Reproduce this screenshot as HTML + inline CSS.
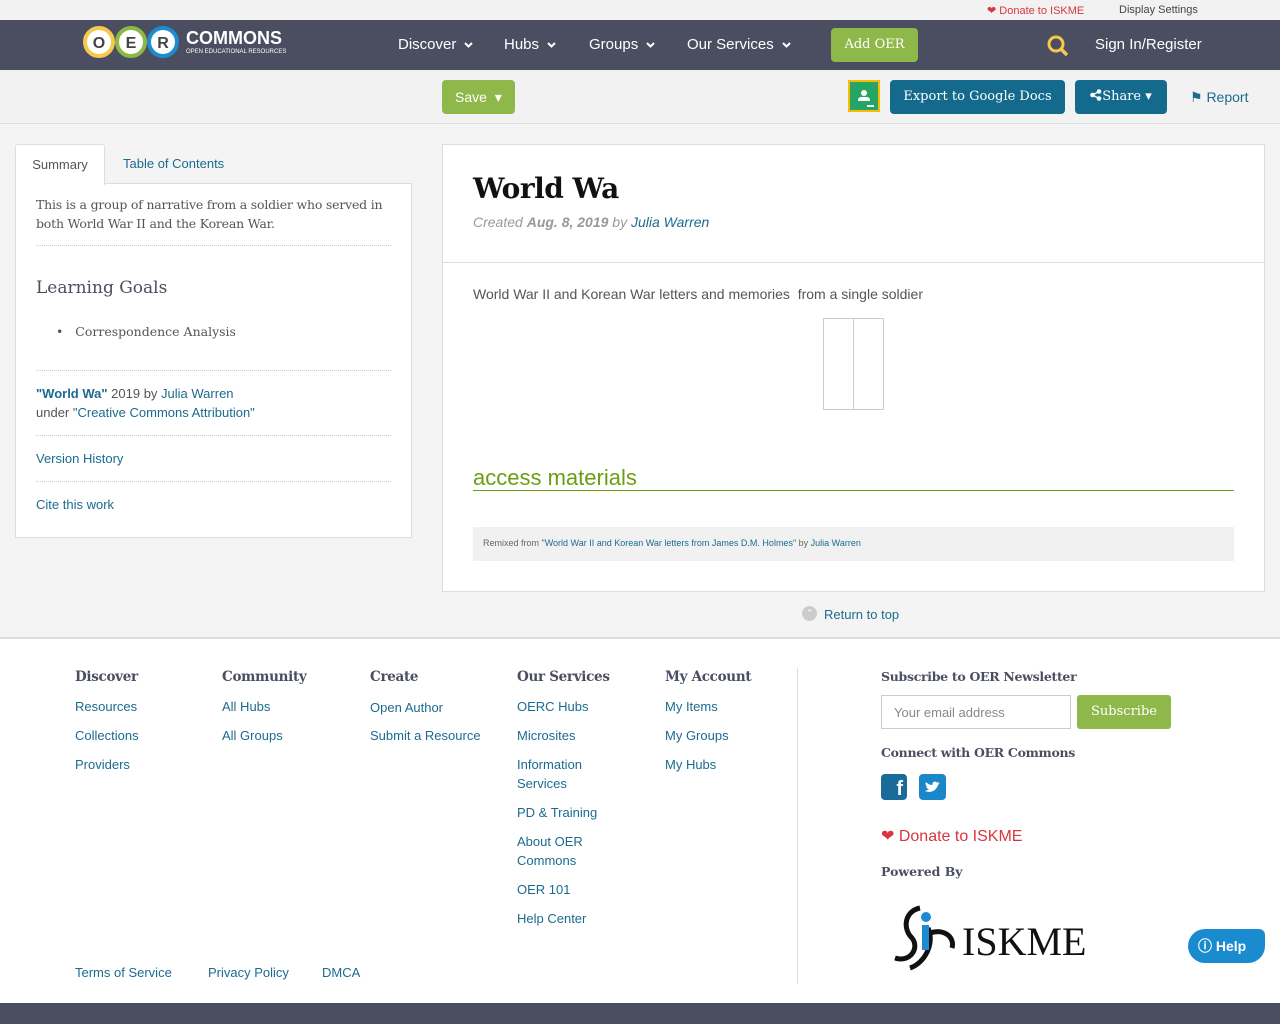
<!DOCTYPE html>
<html><head><meta charset="utf-8"><style>
*{box-sizing:border-box;margin:0;padding:0}
body{width:1280px;height:1024px;overflow:hidden;background:#f4f4f4;font-family:"Liberation Sans",sans-serif;position:relative;color:#444}
a{color:#1b6b8f;text-decoration:none}
.abs{position:absolute}
.serif{font-family:"DejaVu Serif","Liberation Serif",serif}
.chev{display:inline-block;vertical-align:middle;margin-left:8px}
</style></head><body>
<div class="abs" style="left:0;top:0;width:1280px;height:20px;background:#f1f2f1"></div>
<div class="abs" style="left:987px;top:4px;font-size:11px;color:#d9363e">&#10084; Donate to ISKME</div>
<div class="abs" style="left:1119px;top:4px;font-size:11px;color:#444">Display Settings</div>
<div class="abs" style="left:0;top:20px;width:1280px;height:50px;background:#4a4e60"></div>
<svg class="abs" style="left:82px;top:25px" width="205" height="36">
<circle cx="17" cy="17" r="14" fill="#fff" stroke="#f6c94e" stroke-width="4"/>
<circle cx="49" cy="17" r="14" fill="#fff" stroke="#8cb844" stroke-width="4"/>
<circle cx="81" cy="17" r="14" fill="#fff" stroke="#1d8bd1" stroke-width="4"/>
<text x="17" y="23" font-size="16" font-weight="bold" text-anchor="middle" fill="#444" font-family="Liberation Sans">O</text>
<text x="49" y="23" font-size="16" font-weight="bold" text-anchor="middle" fill="#444" font-family="Liberation Sans">E</text>
<text x="81" y="23" font-size="16" font-weight="bold" text-anchor="middle" fill="#444" font-family="Liberation Sans">R</text>
<text x="104" y="19" font-size="18" font-weight="bold" fill="#fff" font-family="Liberation Sans">COMMONS</text>
<text x="104" y="28" font-size="6" fill="#fff" font-family="Liberation Sans">OPEN EDUCATIONAL RESOURCES</text>
</svg>
<div class="abs" style="left:398px;top:36px;font-size:15px;color:#fff">Discover<svg class="chev" width="9" height="6"><path d="M1 1 L4.5 4.5 L8 1" fill="none" stroke="#fff" stroke-width="2"/></svg></div>
<div class="abs" style="left:504px;top:36px;font-size:15px;color:#fff">Hubs<svg class="chev" width="9" height="6"><path d="M1 1 L4.5 4.5 L8 1" fill="none" stroke="#fff" stroke-width="2"/></svg></div>
<div class="abs" style="left:589px;top:36px;font-size:15px;color:#fff">Groups<svg class="chev" width="9" height="6"><path d="M1 1 L4.5 4.5 L8 1" fill="none" stroke="#fff" stroke-width="2"/></svg></div>
<div class="abs" style="left:687px;top:36px;font-size:15px;color:#fff">Our Services<svg class="chev" width="9" height="6"><path d="M1 1 L4.5 4.5 L8 1" fill="none" stroke="#fff" stroke-width="2"/></svg></div>
<div class="abs serif" style="left:831px;top:28px;width:87px;height:34px;background:#8fb84a;border-radius:4px;color:#fff;font-size:13px;text-align:center;line-height:34px">Add OER</div>
<svg class="abs" style="left:1046px;top:34px" width="24" height="24"><circle cx="10" cy="10" r="7" fill="none" stroke="#f6c94e" stroke-width="3"/><line x1="15" y1="15" x2="21" y2="21" stroke="#f6c94e" stroke-width="3.5"/></svg>
<div class="abs" style="left:1095px;top:36px;font-size:15px;color:#fff">Sign In/Register</div>
<div class="abs" style="left:0;top:70px;width:1280px;height:54px;background:#f1f2f1;border-bottom:1px solid #ddd"></div>
<div class="abs" style="left:442px;top:80px;width:73px;height:34px;background:#8fb84a;border-radius:4px;color:#fff;font-size:14px;line-height:34px;padding-left:13px">Save &nbsp;&#9662;</div>
<div class="abs" style="left:848px;top:80px;width:32px;height:32px;background:#fbbc05;padding:2px"><div style="width:28px;height:28px;background:#25a463;position:relative"><div style="position:absolute;left:11px;top:8px;width:6px;height:6px;border-radius:50%;background:#fff"></div><div style="position:absolute;left:8px;top:15px;width:12px;height:4px;background:#fff;border-radius:3px 3px 0 0"></div><div style="position:absolute;left:17px;top:23px;width:7px;height:2px;background:#fff"></div></div></div>
<div class="abs serif" style="left:890px;top:80px;width:175px;height:34px;background:#146a8c;border-radius:4px;color:#fff;font-size:13px;line-height:33px;text-align:center">Export to Google Docs</div>
<div class="abs serif" style="left:1075px;top:80px;width:92px;height:34px;background:#146a8c;border-radius:4px;color:#fff;font-size:13px;line-height:34px;text-align:center"><svg width="12" height="12" style="vertical-align:-1px"><circle cx="9" cy="2.5" r="2.3" fill="#fff"/><circle cx="2.5" cy="6" r="2.3" fill="#fff"/><circle cx="9" cy="9.5" r="2.3" fill="#fff"/><path d="M9 2.5 L2.5 6 L9 9.5" stroke="#fff" fill="none" stroke-width="1.3"/></svg>Share &#9662;</div>
<div class="abs" style="left:1190px;top:89px;font-size:14px;color:#1b6b8f">&#9873; Report</div>
<div class="abs" style="left:15px;top:144px;width:90px;height:41px;background:#fff;border:1px solid #ddd;border-bottom:none;border-radius:3px 3px 0 0;font-size:13px;color:#555;text-align:center;line-height:40px;z-index:2">Summary</div>
<div class="abs" style="left:123px;top:156px;font-size:13px;color:#1b6b8f">Table of Contents</div>
<div class="abs" style="left:15px;top:183px;width:397px;height:355px;background:#fff;border:1px solid #ddd"></div>
<div class="abs serif" style="left:36px;top:195px;width:365px;font-size:12.5px;line-height:19px;color:#555;letter-spacing:-0.2px">This is a group of narrative from a soldier who served in both World War II and the Korean War.</div>
<div class="abs" style="left:36px;top:245px;width:355px;border-top:1px dotted #ccc"></div>
<div class="abs serif" style="left:36px;top:278px;font-size:17px;color:#4a4e60">Learning Goals</div>
<div class="abs serif" style="left:56px;top:324px;font-size:12.5px;color:#555">•&nbsp;&nbsp;&nbsp;Correspondence Analysis</div>
<div class="abs" style="left:36px;top:370px;width:355px;border-top:1px dotted #ccc"></div>
<div class="abs" style="left:36px;top:384px;font-size:13px;line-height:19px;color:#555"><a style="font-weight:bold">"World Wa"</a> 2019 by <a>Julia Warren</a><br>under <a>"Creative Commons Attribution"</a></div>
<div class="abs" style="left:36px;top:435px;width:355px;border-top:1px dotted #ccc"></div>
<div class="abs" style="left:36px;top:451px;font-size:13px"><a>Version History</a></div>
<div class="abs" style="left:36px;top:481px;width:355px;border-top:1px dotted #ccc"></div>
<div class="abs" style="left:36px;top:497px;font-size:13px"><a>Cite this work</a></div>
<div class="abs" style="left:442px;top:144px;width:823px;height:448px;background:#fff;border:1px solid #ddd"></div>
<div class="abs" style="left:443px;top:262px;width:821px;border-top:1px solid #ddd"></div>
<div class="abs serif" style="left:473px;top:172px;font-size:28px;font-weight:bold;color:#111;letter-spacing:-0.5px">World Wa</div>
<div class="abs" style="left:473px;top:214px;font-size:14px;font-style:italic;color:#999">Created <b>Aug. 8, 2019</b> by <a>Julia Warren</a></div>
<div class="abs" style="left:473px;top:286px;font-size:14px;color:#555">World War II and Korean War letters and memories&nbsp; from a single soldier</div>
<div class="abs" style="left:823px;top:318px;width:61px;height:92px;border:1px solid #ccc"></div>
<div class="abs" style="left:853px;top:318px;height:92px;border-left:1px solid #ccc"></div>
<div class="abs" style="left:473px;top:465px;font-size:22px;color:#6a9e12">access materials</div>
<div class="abs" style="left:473px;top:490px;width:761px;border-top:1.5px solid #6a9e12"></div>
<div class="abs" style="left:473px;top:527px;width:761px;height:34px;background:#f1f1f1;font-size:9px;color:#666;padding:11px 10px">Remixed from <a>"World War II and Korean War letters from James D.M. Holmes"</a> by <a>Julia Warren</a></div>
<div class="abs" style="left:802px;top:606px;width:15px;height:15px;border-radius:50%;background:#ccc;color:#fff;font-size:9px;text-align:center;line-height:15px">&#8963;</div>
<div class="abs" style="left:824px;top:607px;font-size:13px;color:#1b6b8f">Return to top</div>
<div class="abs" style="left:0;top:637px;width:1280px;height:366px;background:#fff;border-top:2px solid #ddd"></div>
<div class="abs serif" style="left:75px;top:669px;font-size:13.5px;font-weight:bold;color:#4a4e60;letter-spacing:-0.3px">Discover</div>
<div class="abs serif" style="left:222px;top:669px;font-size:13.5px;font-weight:bold;color:#4a4e60;letter-spacing:-0.3px">Community</div>
<div class="abs serif" style="left:370px;top:669px;font-size:13.5px;font-weight:bold;color:#4a4e60;letter-spacing:-0.3px">Create</div>
<div class="abs serif" style="left:517px;top:669px;font-size:13.5px;font-weight:bold;color:#4a4e60;letter-spacing:-0.3px">Our Services</div>
<div class="abs serif" style="left:665px;top:669px;font-size:13.5px;font-weight:bold;color:#4a4e60;letter-spacing:-0.3px">My Account</div>
<div class="abs" style="left:75px;top:692px;font-size:13px;line-height:29px"><a>Resources</a><br><a>Collections</a><br><a>Providers</a></div>
<div class="abs" style="left:222px;top:692px;font-size:13px;line-height:29px"><a>All Hubs</a><br><a>All Groups</a></div>
<div class="abs" style="left:370px;top:694px;font-size:13px;line-height:28px"><a>Open Author</a><br><a>Submit a Resource</a></div>
<div class="abs" style="left:517px;top:697px;font-size:13px;line-height:19px;width:100px"><a>OERC Hubs</a><div style="height:10px"></div><a>Microsites</a><div style="height:10px"></div><a>Information Services</a><div style="height:10px"></div><a>PD &amp; Training</a><div style="height:10px"></div><a>About OER Commons</a><div style="height:10px"></div><a>OER 101</a><div style="height:10px"></div><a>Help Center</a></div>
<div class="abs" style="left:665px;top:692px;font-size:13px;line-height:29px"><a>My Items</a><br><a>My Groups</a><br><a>My Hubs</a></div>
<div class="abs" style="left:75px;top:965px;font-size:13px"><a>Terms of Service</a></div>
<div class="abs" style="left:208px;top:965px;font-size:13px"><a>Privacy Policy</a></div>
<div class="abs" style="left:322px;top:965px;font-size:13px"><a>DMCA</a></div>
<div class="abs" style="left:797px;top:668px;height:316px;border-left:1px solid #ddd"></div>
<div class="abs serif" style="left:881px;top:669px;font-size:12.5px;font-weight:bold;color:#4a4e60;letter-spacing:-0.3px">Subscribe to OER Newsletter</div>
<div class="abs" style="left:881px;top:695px;width:190px;height:34px;border:1px solid #ccc;font-size:13px;color:#888;padding:9px 12px">Your email address</div>
<div class="abs serif" style="left:1077px;top:695px;width:94px;height:34px;background:#8fb84a;border-radius:3px;color:#fff;font-size:13px;text-align:center;line-height:34px">Subscribe</div>
<div class="abs serif" style="left:881px;top:745px;font-size:12.5px;font-weight:bold;color:#4a4e60;letter-spacing:-0.3px">Connect with OER Commons</div>
<div class="abs" style="left:881px;top:774px;width:26px;height:26px;background:#1b6b9a;border-radius:4px;color:#fff;font-weight:bold;font-size:20px;text-align:right;padding-right:4px;line-height:30px">f</div>
<div class="abs" style="left:919px;top:774px;width:27px;height:26px;background:#1b86c8;border-radius:4px"><svg width="27" height="26"><path d="M6 17 C10 19 17 18 19 11 L21 9 L19 9.5 L20 8 L18 8.5 C16 6.5 13 8 13.5 11 C10.5 11 8.5 9.5 7 8 C6 10 7 12 8.5 12.5 L7 12.5 C7.5 14 8.5 15 10 15 C9 16 7.5 16.5 6 17Z" fill="#fff"/></svg></div>
<div class="abs" style="left:881px;top:826px;font-size:16px;color:#d9363e">&#10084; Donate to ISKME</div>
<div class="abs serif" style="left:881px;top:864px;font-size:12.5px;font-weight:bold;color:#4a4e60">Powered By</div>
<svg class="abs" style="left:890px;top:903px" width="200" height="70"><path d="M30 5 C15 8 12 25 22 35 C30 45 20 60 5 55 M38 25 C45 40 35 60 20 65 M40 30 C55 25 65 35 62 45" fill="none" stroke="#111" stroke-width="5"/><circle cx="36" cy="14" r="5" fill="#1d8bd1"/><rect x="32" y="22" width="7" height="25" fill="#1d8bd1"/><text x="72" y="52" font-size="40" font-family="Liberation Serif" fill="#111">ISKME</text></svg>
<div class="abs" style="left:1188px;top:929px;width:77px;height:34px;background:#1b8bd0;border-radius:17px 6px 17px 17px;color:#fff;font-weight:bold;font-size:14px;line-height:34px;padding-left:10px">&#9432; Help</div>
<div class="abs" style="left:0;top:1003px;width:1280px;height:21px;background:#4a4e60"></div>
</body></html>
